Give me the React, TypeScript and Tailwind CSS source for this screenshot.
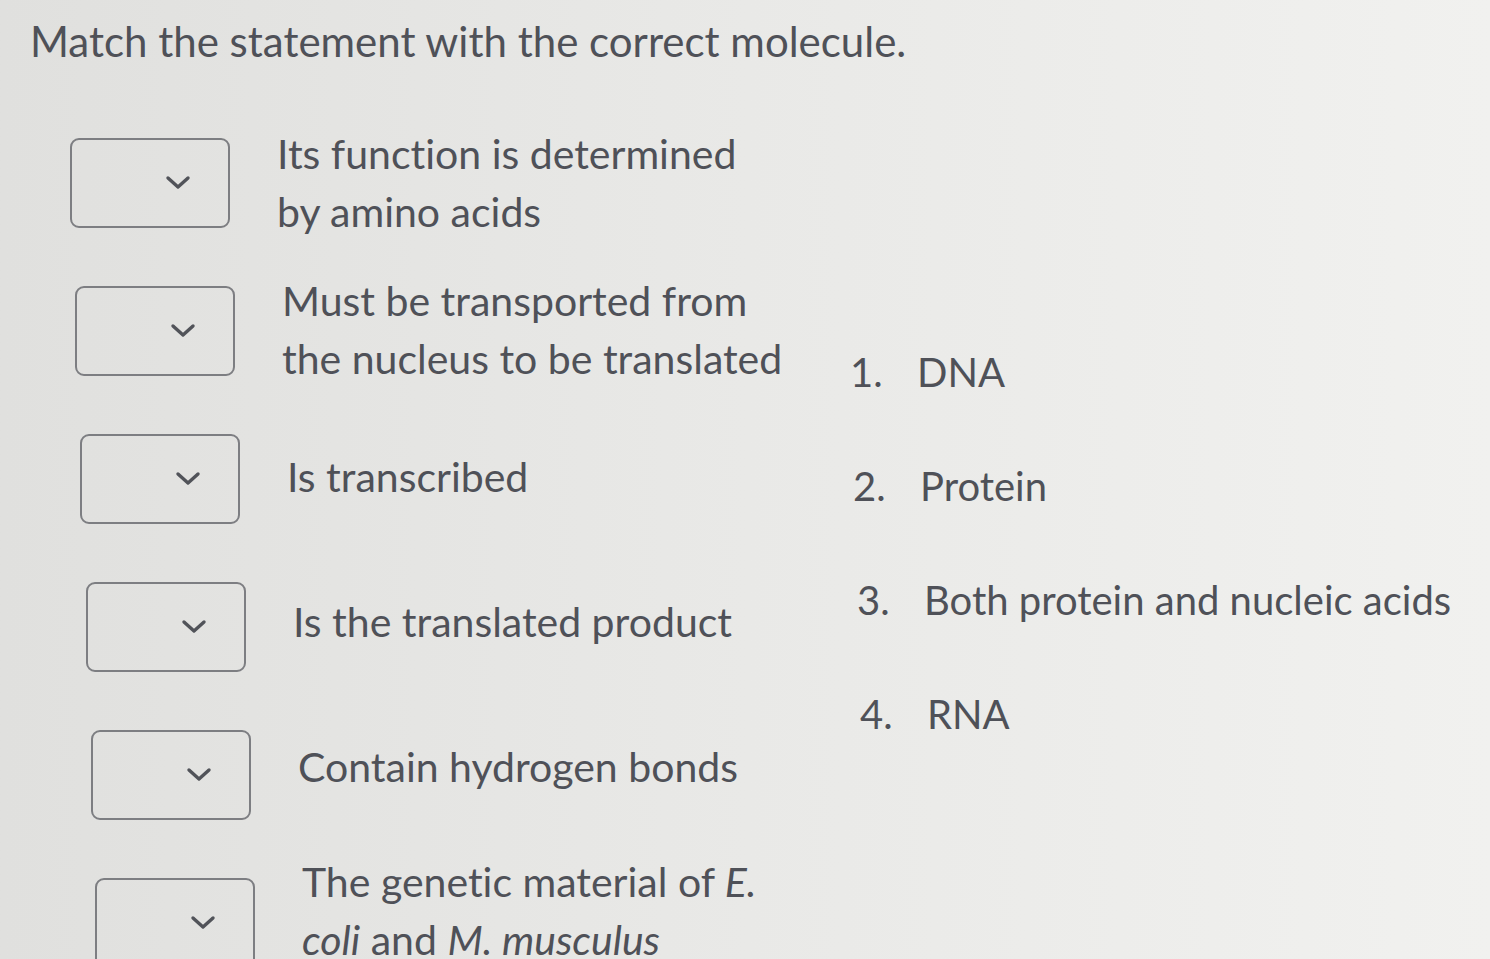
import React, { FC } from 'react';

interface Statement {
  id: number;
  lines: React.ReactNode[];
  indent: string;
  lift: string;
}

const statements: Statement[] = [
  { id: 1, lines: ['Its function is determined', 'by amino acids'], indent: 'pl-[70px]', lift: 'mb-0' },
  { id: 2, lines: ['Must be transported from', 'the nucleus to be translated'], indent: 'pl-[75px]', lift: 'mb-[2px]' },
  { id: 3, lines: ['Is transcribed'], indent: 'pl-[80px]', lift: 'mb-[4px]' },
  { id: 4, lines: ['Is the translated product'], indent: 'pl-[86px]', lift: 'mb-[10px]' },
  { id: 5, lines: ['Contain hydrogen bonds'], indent: 'pl-[91px]', lift: 'mb-[16px]' },
  {
    id: 6,
    lines: [
      <>
        The genetic material of <i>E.</i>
      </>,
      <>
        <i>coli</i> and <i>M. musculus</i>
      </>,
    ],
    indent: 'pl-[95px]',
    lift: 'mb-[24px]',
  },
];

const choices = [
  { n: 1, label: 'DNA', indent: 'pl-[850px]' },
  { n: 2, label: 'Protein', indent: 'pl-[853px]' },
  { n: 3, label: 'Both protein and nucleic acids', indent: 'pl-[857px]' },
  { n: 4, label: 'RNA', indent: 'pl-[860px]' },
];

const Chevron: FC = () => (
  <svg width="26" height="16" viewBox="0 0 26 16" fill="none">
    <path d="M3 3l10 9 10-9" stroke="#515359" strokeWidth="3.4" strokeLinecap="round" strokeLinejoin="round" />
  </svg>
);

const Dropdown: FC = () => (
  <div className="flex h-[90px] w-[160px] shrink-0 items-center justify-end rounded-[9px] border-2 border-[#7d7e82] pr-[37px]">
    <Chevron />
  </div>
);

const App: FC = () => {
  return (
    <div
      className="relative h-[959px] w-[1490px] overflow-hidden bg-gradient-to-r from-[#e0e0de] via-[#e9e9e7] to-[#f1f1ef] text-[#4f5158] [font-variant-ligatures:none]"
      style={{ fontFamily: 'Lato, "Open Sans", sans-serif' }}
    >
      <h1 className="pl-[30px] pt-[14px] text-[42px] leading-[54px] font-normal">
        Match the statement with the correct molecule.
      </h1>

      <div className="flex flex-col pt-[41px]">
        {statements.map((s) => (
          <div key={s.id} className={`flex h-[148px] items-center ${s.indent}`}>
            <Dropdown />
            <div className={`ml-[47px] text-[41px] leading-[58px] ${s.lift}`}>
              {s.lines.map((line, i) => (
                <div key={i}>{line}</div>
              ))}
            </div>
          </div>
        ))}
      </div>

      <div className="absolute left-0 top-[343px] flex flex-col gap-[56px]">
        {choices.map((c) => (
          <div key={c.n} className={`flex text-[40px] leading-[58px] ${c.indent}`}>
            <span className="w-[67px]">{c.n}.</span>
            <span>{c.label}</span>
          </div>
        ))}
      </div>
    </div>
  );
};

export default App;
